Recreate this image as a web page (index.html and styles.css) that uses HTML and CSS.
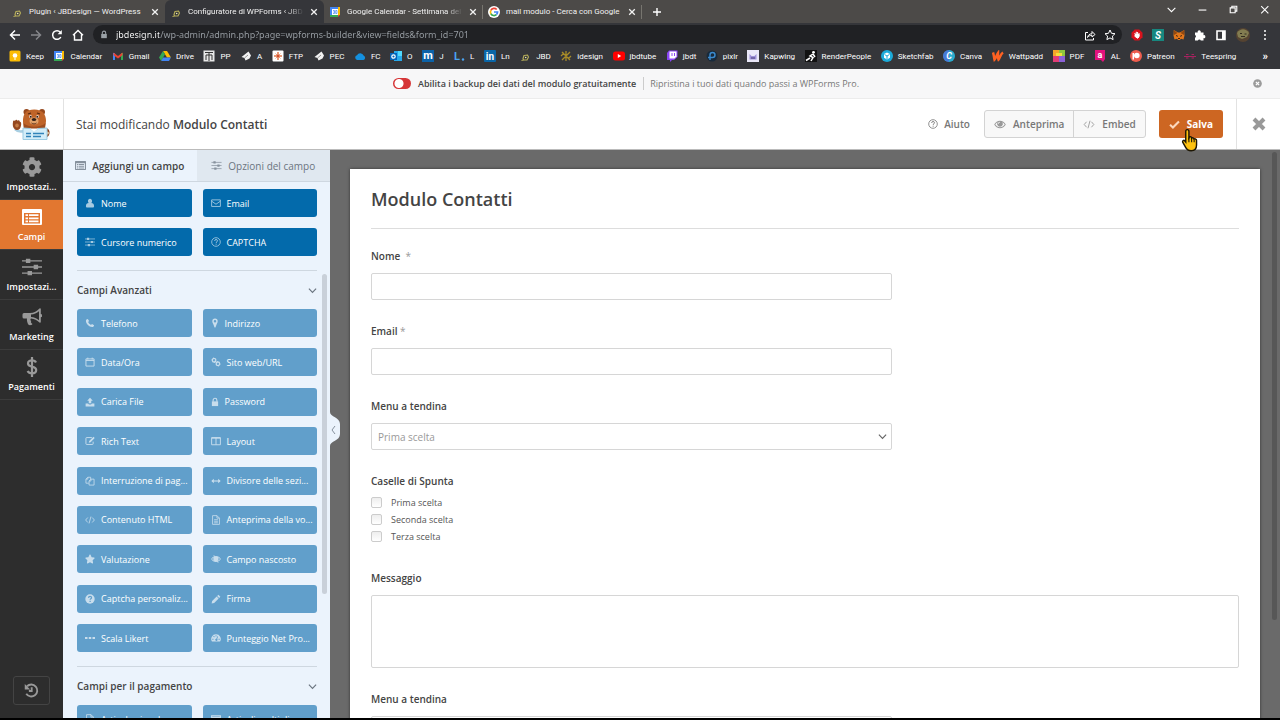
FILE: index.html
```html
<!DOCTYPE html>
<html lang="it">
<head>
    <meta charset="UTF-8">
    <meta name="viewport" content="width=device-width, initial-scale=1.0">
    <title>Configuratore di WPForms</title>
    <link rel="stylesheet" href="styles.css">
</head>
<body>
    <svg class="sprite" aria-hidden="true">
        <symbol id="i-x" viewBox="0 0 10 10"><path d="M1.5 1.5l7 7M8.500 1.500l-7 7" fill="none" stroke="currentColor" stroke-width="1.600"/></symbol>
        <symbol id="i-shell" viewBox="0 0 12 12"><path d="M5 5.500l3.500-.5 1 2-1.500 3H4.500L4 8.500z" fill="none" stroke="#b9b05a" stroke-width="1.100"/><path d="M4.500 10l-2 .5" stroke="#b9b05a"/><circle cx="6.700" cy="7.500" r=".8" fill="#eee9b0"/></symbol>
        <symbol id="i-gcal" viewBox="0 0 12 12"><path d="M1 1h10v7l-3 3H1z" fill="#4285f4"/><path d="M9 1h2v8H9z" fill="#fbbc04"/><path d="M1 9h8v2H1z" fill="#34a853"/><path d="M9 9h2l-2 2z" fill="#ea4335"/><path d="M3 3h6v6H3z" fill="#fff"/><path d="M4 4.500h1.500v3H4M4.300 6h1M6.700 4.500H8v3H6.700z" fill="none" stroke="#4285f4" stroke-width=".7"/></symbol>
        <symbol id="i-white" viewBox="0 0 12 12"><path d="M8.500 1.500L1.500 7l3 1 1 2.500 4-2 1.500-3z" fill="#f2f2f2"/><path d="M4.500 8L8 5" stroke="#777" stroke-width=".8"/></symbol>
        <symbol id="i-cog" viewBox="0 0 512 512"><path fill="currentColor" d="M487.400 315.700l-42.600-24.600c4.300-23.200 4.300-47 0-70.200l42.600-24.600c4.900-2.800 7.100-8.600 5.500-14-11.100-35.600-30-67.800-54.700-94.600-3.800-4.100-10-5.100-14.800-2.300L380.800 110c-17.900-15.400-38.500-27.300-60.800-35.100V25.800c0-5.600-3.900-10.500-9.400-11.700-36.700-8.200-74.300-7.800-109.200 0-5.500 1.200-9.400 6.100-9.400 11.700V75c-22.200 7.900-42.800 19.800-60.800 35.100L88.700 85.500c-4.900-2.800-11-1.900-14.800 2.300-24.700 26.700-43.600 58.900-54.700 94.600-1.700 5.400.6 11.200 5.500 14L67.300 221c-4.300 23.200-4.300 47 0 70.200l-42.600 24.600c-4.900 2.800-7.100 8.600-5.500 14 11.100 35.600 30 67.800 54.700 94.600 3.800 4.100 10 5.100 14.800 2.300l42.600-24.600c17.900 15.400 38.500 27.300 60.800 35.100v49.200c0 5.600 3.900 10.500 9.400 11.700 36.700 8.200 74.300 7.800 109.200 0 5.500-1.200 9.400-6.100 9.400-11.700v-49.200c22.200-7.900 42.800-19.800 60.800-35.100l42.600 24.600c4.900 2.800 11 1.900 14.800-2.300 24.700-26.700 43.600-58.900 54.700-94.600 1.500-5.500-.7-11.300-5.600-14.100zM256 336c-44.100 0-80-35.900-80-80s35.900-80 80-80 80 35.900 80 80-35.900 80-80 80z"/></symbol>
        <symbol id="i-list" viewBox="0 0 20 16"><path fill="currentColor" fill-rule="evenodd" d="M1 0h18a1 1 0 0 1 1 1v14a1 1 0 0 1-1 1H1a1 1 0 0 1-1-1V1a1 1 0 0 1 1-1zm1 4v10.500h16V4zm1.500 1.300H6v1.800H3.500zm3.500 0h9.500v1.800H7zM3.500 8.400H6v1.800H3.500zm3.500 0h9.500v1.800H7zm-3.500 3.100H6v1.800H3.500zm3.500 0h9.500v1.800H7z"/></symbol>
        <symbol id="i-sliders" viewBox="0 0 18 16"><path d="M0 2.500h18M0 8h18M0 13.500h18" stroke="currentColor" stroke-width="1.300"/><path d="M3.500.5h4v4h-4zM10.500 6h4v4h-4zM5 11.500h4v4H5z" fill="currentColor"/></symbol>
        <symbol id="i-horn" viewBox="0 0 20 18"><path fill="currentColor" fill-rule="evenodd" d="M2 5h6c4 0 7-2 9.500-4.500.6-.5 1.300-.2 1.300.5v5a1.600 1.600 0 0 1 0 3.200V14c0 .8-.8 1-1.300.5C15 12.300 12.500 10.800 9 10.500c-1 1-.5 2 .2 2.700-.7 1 .1 2 1.300 2.800-.8 1.400-3.300 1.500-4.200.6C5.500 14.500 4.600 13 5 10.500H2A1.500 1.500 0 0 1 .5 9V6.500A1.500 1.500 0 0 1 2 5zm7 1.500v2.600c3 .2 5.800 1.500 8 3.200V3.200C14.800 5 12 6.300 9 6.500z"/></symbol>
        <symbol id="i-dollar" viewBox="0 0 12 20"><path d="M10 5.500C9.200 3.800 7.500 3.400 6 3.400c-2.300 0-4 1-4 3 0 2.100 1.900 2.700 4 3.200 2.200.5 4.200 1.200 4.200 3.500 0 2.200-1.900 3.300-4.200 3.300-1.900 0-3.600-.8-4.400-2.400M6 0v20" fill="none" stroke="currentColor" stroke-width="2.200"/></symbol>
        <symbol id="i-history" viewBox="0 0 16 16"><path d="M3.200 3.500A6.400 6.400 0 1 1 2.400 11.500M8.200 4.500V8.500h-3" fill="none" stroke="currentColor" stroke-width="2"/><path d="M.8 1v5.800h5.800z" fill="currentColor"/></symbol>
        <symbol id="i-user" viewBox="0 0 16 16"><path fill="currentColor" d="M8 1c2 0 3.300 1.500 3.300 3.800 0 1.300-.5 2.500-1.300 3.200 2.800.3 4.500 1.700 4.500 5 0 1.300-.8 2-2 2h-9c-1.200 0-2-.7-2-2 0-3.300 1.700-4.700 4.500-5C5.200 7.300 4.700 6.100 4.700 4.800 4.700 2.500 6 1 8 1z"/></symbol>
        <symbol id="i-mail" viewBox="0 0 16 16"><path d="M1 3h14v10.500H1zM1 5l7 5 7-5" fill="none" stroke="currentColor" stroke-width="1.400"/></symbol>
        <symbol id="i-help" viewBox="0 0 16 16"><circle cx="8" cy="8" r="6.900" fill="none" stroke="currentColor" stroke-width="1.300"/><path d="M5.800 6.300c.1-1.500 1-2.300 2.300-2.300s2.300.8 2.300 2c0 1.600-2.200 1.700-2.200 3.400M8.200 10.700v1.600" fill="none" stroke="currentColor" stroke-width="1.500"/></symbol>
        <symbol id="i-helpfull" viewBox="0 0 16 16"><circle cx="8" cy="8" r="7.500" fill="currentColor"/><path d="M5.600 6.200c.1-1.500 1.100-2.400 2.500-2.400s2.400.8 2.400 2.100c0 1.700-2.300 1.700-2.300 3.400M8.200 10.700v1.900" fill="none" stroke="#619fcb" stroke-width="2"/></symbol>
        <symbol id="i-phone" viewBox="0 0 16 16"><path fill="currentColor" d="M4.500 1.500l2 3.300-1.500 1.700c.9 2 2.500 3.600 4.500 4.500l1.700-1.500 3.300 2c0 1.800-1.400 3-3 3C6.500 14.500 1.500 9.500 1.500 4.500c0-1.600 1.200-3 3-3z"/></symbol>
        <symbol id="i-pin" viewBox="0 0 10 16"><path fill="currentColor" fill-rule="evenodd" d="M5 .8a4.300 4.300 0 0 1 4.300 4.300c0 2-1.200 3.700-1.800 5.200L5.700 15H4.300l-1.800-4.700C1.900 8.800.7 7.100.7 5.100A4.300 4.300 0 0 1 5 .8zm0 2.300a2 2 0 1 0 0 4 2 2 0 0 0 0-4z"/></symbol>
        <symbol id="i-date" viewBox="0 0 16 16"><path d="M1.500 3h13v11.500h-13zM1.500 5.500h13M4.500 1v3M11.500 1v3" fill="none" stroke="currentColor" stroke-width="1.500"/></symbol>
        <symbol id="i-link" viewBox="0 0 16 16"><path d="M6.500 8.500L3 7.500 1.800 4.500 4 2l3.200 1L8 6M9.500 7.500l3.500 1 1.200 3L12 14l-3.200-1L8 10M6 6l4 4" fill="none" stroke="currentColor" stroke-width="2"/></symbol>
        <symbol id="i-upload" viewBox="0 0 16 16"><path fill="currentColor" d="M8 1l4.500 4.800H10V10H6V5.800H3.500zM1 10.500h4c.5 1 1.200 1.500 3 1.500s2.500-.5 3-1.500h4V15H1z"/></symbol>
        <symbol id="i-lock" viewBox="0 0 12 16"><path fill="currentColor" d="M1 7h10v7.500H1z"/><path d="M3 7.500V5a3 3 0 0 1 6 0v2.500" fill="none" stroke="currentColor" stroke-width="1.800"/></symbol>
        <symbol id="i-edit" viewBox="0 0 16 16"><path d="M11 2.500H2.500A1 1 0 0 0 1.500 3.500v9a1 1 0 0 0 1 1H12a1 1 0 0 0 1-1V9" fill="none" stroke="currentColor" stroke-width="1.500"/><path d="M13.500 1l2 2L9 9.800l-3 .8.700-2.800z" fill="currentColor"/></symbol>
        <symbol id="i-columns" viewBox="0 0 16 16"><path d="M1 2.500h14v11.500H1zM8 2.500V14M1 3.500h14" fill="none" stroke="currentColor" stroke-width="1.500"/></symbol>
        <symbol id="i-pages" viewBox="0 0 16 16"><path d="M6 11.500H1.500V5L4.500 2H9v3M4.500 2v3h-3M9.500 5H14.500v9.500H6.500V8zM9.500 5v3h-3" fill="none" stroke="currentColor" stroke-width="1.300"/></symbol>
        <symbol id="i-arrows" viewBox="0 0 16 16"><path d="M2 8h12" stroke="currentColor" stroke-width="1.800"/><path d="M4.500 4.500L.5 8l4 3.500zM11.500 4.500l4 3.500-4 3.500z" fill="currentColor"/></symbol>
        <symbol id="i-code" viewBox="0 0 16 16"><path d="M4.500 4L1 8l3.500 4M11.500 4L15 8l-3.500 4M9.500 2.500l-3 11" fill="none" stroke="currentColor" stroke-width="1.300"/></symbol>
        <symbol id="i-file" viewBox="0 0 16 16"><path d="M2.500 1h7l4 4v10h-11zM9.500 1v4h4M5 7.500h6M5 10h6M5 12.500h6" fill="none" stroke="currentColor" stroke-width="1.300"/></symbol>
        <symbol id="i-star" viewBox="0 0 576 512"><path fill="currentColor" d="M259.300 17.800L194 150.200 47.900 171.500c-26.200 3.800-36.700 36.100-17.700 54.600l105.700 103-25 145.500c-4.500 26.300 23.200 46 46.400 33.700L288 439.600l130.700 68.700c23.200 12.200 50.900-7.400 46.400-33.700l-25-145.500 105.700-103c19-18.500 8.500-50.800-17.700-54.600L382 150.200 316.700 17.800c-11.700-23.600-45.600-23.900-57.400 0z"/></symbol>
        <symbol id="i-eye" viewBox="0 0 18 16"><path fill="currentColor" fill-rule="evenodd" d="M9 2.500c3.600 0 6.800 2.200 8.700 5.500-1.900 3.300-5.100 5.500-8.700 5.500S2.200 11.300.3 8C2.200 4.700 5.400 2.500 9 2.500zM1.900 8c1.600 2.400 4.200 4.200 7.100 4.200s5.500-1.800 7.100-4.200A9 9 0 0 0 12.600 4.700 4.300 4.300 0 1 1 5.400 4.700 9 9 0 0 0 1.900 8zM9 3.800a3 3 0 0 0-3 3h1.200A1.800 1.800 0 0 1 9 5z"/></symbol>
        <symbol id="i-eyeoff" viewBox="0 0 18 16"><path fill="currentColor" fill-rule="evenodd" d="M9 2.500c3.600 0 6.800 2.200 8.700 5.500-1.900 3.300-5.100 5.500-8.700 5.500S2.200 11.300.3 8C2.200 4.700 5.400 2.500 9 2.500zM1.900 8c1.200 1.900 3 3.300 5.100 3.900A4.300 4.300 0 0 1 5.400 4.700 9 9 0 0 0 1.900 8zm10.700-3.300a4.300 4.300 0 0 1-1.500 6.900c2-.6 3.800-2 5-3.600a9 9 0 0 0-3.500-3.300z"/><path d="M5 1l8 14" stroke="currentColor" stroke-width="1.300"/></symbol>
        <symbol id="i-pencil" viewBox="0 0 16 16"><path fill="currentColor" d="M11.800 1l3.200 3.200-2 2L9.800 3zM9 3.800L12.200 7 5 14.200l-4 .8.800-4z"/></symbol>
        <symbol id="i-dots" viewBox="0 0 16 16"><path fill="currentColor" d="M0 6.500h4v3H0zM6 6.500h4v3H6zM12 6.500h4v3h-4z"/></symbol>
        <symbol id="i-gauge" viewBox="0 0 16 16"><path fill="currentColor" fill-rule="evenodd" d="M8 2a7.500 7.500 0 0 1 6.500 11.500h-13A7.500 7.500 0 0 1 8 2zm-.8 1.500v2h1.600v-2zM2 9v1.600h2V9zm10 0v1.600h2V9zM3.500 5.500L5 7l1-1-1.500-1.500zM10.200 5L8.500 9a1.800 1.800 0 1 0 1.400.5l1.500-4z"/></symbol>
        <symbol id="i-card" viewBox="0 0 16 16"><path d="M1 3h14v10H1zM1 5.500h14" fill="none" stroke="currentColor" stroke-width="1.800"/></symbol>
        <symbol id="i-down" viewBox="0 0 10 10"><path d="M1 3l4 4 4-4" fill="none" stroke="currentColor" stroke-width="1.300"/></symbol>
        <symbol id="i-check" viewBox="0 0 16 16"><path d="M1.500 8.500l4.200 4L14.500 3.500" fill="none" stroke="currentColor" stroke-width="3"/></symbol>
    </svg>

    <header class="browser">
        <div class="tabs">
            <div class="tab">
                <svg class="fav"><use href="#i-shell"/></svg>
                <span class="tab-title">Plugin ‹ JBDesign — WordPress</span>
                <button class="tab-close" aria-label="Chiudi scheda"><svg><use href="#i-x"/></svg></button>
            </div>
            <div class="tab active">
                <svg class="fav"><use href="#i-shell"/></svg>
                <span class="tab-title fade">Configuratore di WPForms ‹ JBD</span>
                <button class="tab-close" aria-label="Chiudi scheda"><svg><use href="#i-x"/></svg></button>
            </div>
            <div class="tab line">
                <svg class="fav"><use href="#i-gcal"/></svg>
                <span class="tab-title fade">Google Calendar - Settimana del</span>
                <button class="tab-close" aria-label="Chiudi scheda"><svg><use href="#i-x"/></svg></button>
            </div>
            <div class="tab line">
                <svg class="fav" viewBox="0 0 12 12"><circle cx="6" cy="6" r="6" fill="#fff"/><g fill="none" stroke-width="1.700"><path d="M8.700 3.500A3.600 3.600 0 0 0 2.900 4.300" stroke="#ea4335"/><path d="M2.900 4.300a3.600 3.600 0 0 0 0 3.500" stroke="#fbbc04"/><path d="M2.900 7.800a3.600 3.600 0 0 0 5.500.8" stroke="#34a853"/><path d="M8.400 8.600A3.600 3.600 0 0 0 9.600 6H6" stroke="#4285f4"/></g></svg>
                <span class="tab-title">mail modulo - Cerca con Google</span>
                <button class="tab-close" aria-label="Chiudi scheda"><svg><use href="#i-x"/></svg></button>
            </div>
            <button class="new-tab" aria-label="Nuova scheda"><svg viewBox="0 0 10 10"><path d="M5 1v8M1 5h8" stroke="currentColor" stroke-width="1.400"/></svg></button>
            <div class="window-buttons">
                <button aria-label="Cerca schede"><svg viewBox="0 0 10 10"><path d="M1.500 3.500L5 7l3.500-3.500" fill="none" stroke="currentColor"/></svg></button>
                <button aria-label="Riduci"><svg viewBox="0 0 10 10"><path d="M1.500 5.500h7" stroke="currentColor"/></svg></button>
                <button aria-label="Ripristina"><svg viewBox="0 0 10 10"><path d="M2 3.500h4.500V8H2zM3.500 3.500V2H8v4.500H6.500" fill="none" stroke="currentColor"/></svg></button>
                <button aria-label="Chiudi"><svg viewBox="0 0 10 10"><path d="M2 2l6.500 6.500M8.500 2L2 8.500" stroke="currentColor"/></svg></button>
            </div>
        </div>

        <div class="toolbar">
            <button aria-label="Indietro"><svg viewBox="0 0 12 12"><path d="M11 6H2M6 1.500L1.500 6 6 10.500" fill="none" stroke="currentColor" stroke-width="1.500"/></svg></button>
            <button class="dim" aria-label="Avanti"><svg viewBox="0 0 12 12"><path d="M1 6h9M6 1.500L10.500 6 6 10.500" fill="none" stroke="currentColor" stroke-width="1.500"/></svg></button>
            <button aria-label="Ricarica"><svg viewBox="0 0 12 12"><path d="M9.800 8A4.300 4.300 0 1 1 9.300 3.300" fill="none" stroke="currentColor" stroke-width="1.500"/><path d="M10.800 1v4.200H6.600z" fill="currentColor"/></svg></button>
            <button aria-label="Home"><svg viewBox="0 0 12 12"><path d="M1 6.300L6 1.500l5 4.800M2.500 5.500V11h7V5.500" fill="none" stroke="currentColor" stroke-width="1.400"/></svg></button>
            <div class="address">
                <svg class="padlock"><use href="#i-lock"/></svg>
                <input type="text" aria-label="Indirizzo" value="jbdesign.it/wp-admin/admin.php?page=wpforms-builder&amp;view=fields&amp;form_id=701">
                <button aria-label="Condividi"><svg viewBox="0 0 12 12"><path d="M4 3.500H1.500V11h8V9M3.500 8.500c.5-2.500 2-3.700 4.500-3.700V2.500L11 5.500 8 8V6.300C6 6.300 4.600 7 3.500 8.500z" fill="none" stroke="currentColor"/></svg></button>
                <button aria-label="Preferiti"><svg viewBox="0 0 12 12"><path d="M6 1l1.500 3.300 3.500.4-2.600 2.400.7 3.500L6 8.900l-3.100 1.700.7-3.500L1 4.700l3.500-.4z" fill="none" stroke="currentColor"/></svg></button>
            </div>
            <div class="extensions">
                <button aria-label="Adblock"><svg viewBox="0 0 12 12"><path d="M3.700.5h4.600l3.200 3.200v4.600l-3.200 3.200H3.700L.5 8.300V3.700z" fill="#d8121c"/><path d="M4 5.500V4M5.300 5.500V2.800M6.600 5.500V3M8 7V4M4 5.500h4V8L6.500 9.300 3.500 7" stroke="#fff" stroke-width="1" fill="#fff"/></svg></button>
                <button aria-label="Stylish"><svg viewBox="0 0 12 12"><path d="M0 0h12v12H0z" fill="#17877f"/><text x="6" y="10" font-size="10" font-weight="700" font-style="italic" text-anchor="middle" fill="#fff">S</text></svg></button>
                <button aria-label="MetaMask"><svg viewBox="0 0 12 12"><path d="M.8 1L5 3.500h2L11.200 1l.3 5.500-1 4L8 9.700 6.800 11H5.200L4 9.700l-2.500.8-1-4z" fill="#e2761b"/><path d="M3 6.500l1.800.8M9 6.500l-1.800.8M5 9.500h2" stroke="#3a2314"/><path d="M.8 1L4.500 4 1 6z" fill="#94490f"/><path d="M11.200 1L7.500 4 11 6z" fill="#94490f"/></svg></button>
                <button aria-label="Estensioni"><svg viewBox="0 0 12 12"><path d="M1 3.500h2.700a1.600 1.600 0 1 1 3 0H9.500v2.700a1.500 1.500 0 1 1 0 2.900V11.500H6.800a1.500 1.500 0 0 0-2.900 0H1V8.800a1.500 1.500 0 0 0 0-2.800z" fill="#fff"/></svg></button>
                <button aria-label="Pannello laterale"><svg viewBox="0 0 12 12"><path d="M2 2h8v8.500H2z" fill="none" stroke="#fff" stroke-width="1.600"/><path d="M7 2h3v8H7z" fill="#fff"/></svg></button>
                <button aria-label="Profilo"><svg class="avatar" viewBox="0 0 14 14"><circle cx="7" cy="7" r="7" fill="#554331"/><path d="M1 5c3-5 9-5 12 0l-2 4-5 2-4-2z" fill="#827c50"/><path d="M4 5.500h2M8.500 6h2M5 8.500h4" stroke="#332d20"/></svg></button>
                <button aria-label="Menu"><svg viewBox="0 0 12 12"><circle cx="6" cy="2" r="1" fill="#fff"/><circle cx="6" cy="6" r="1" fill="#fff"/><circle cx="6" cy="10" r="1" fill="#fff"/></svg></button>
            </div>
        </div>

        <nav class="bookmarks">
            <div class="bookmark-list">
                <a href="#"><svg viewBox="0 0 12 12"><rect x=".5" y=".5" width="11" height="11" rx="1.500" fill="#fbbc04"/><circle cx="6" cy="5.500" r="2.300" fill="#fff"/><path d="M5 8.500h2v1H5z" fill="#fff"/></svg>Keep</a>
                <a href="#"><svg><use href="#i-gcal"/></svg>Calendar</a>
                <a href="#"><svg viewBox="0 0 12 12"><path d="M1 10V3h2v7z" fill="#4285f4"/><path d="M9 10V3h2v7z" fill="#34a853"/><path d="M1.500 2.500L6 6l4.500-3.500v2.700L6 8.500 1.500 5.200z" fill="#ea4335"/></svg>Gmail</a>
                <a href="#"><svg viewBox="0 0 12 12"><path d="M4 1h4l4 6.500H8z" fill="#fbbc04"/><path d="M4 1l2 3.300L2.200 11 0 7.500z" fill="#34a853"/><path d="M4 7.500h8L10 11H2.200z" fill="#4285f4"/></svg>Drive</a>
                <a href="#"><svg viewBox="0 0 12 12"><path d="M.5.5h11v11H.5z" fill="#e8e8e8"/><path d="M2 2.500h8M3 5h6M6 3v8M3 5v5M9 5v5" stroke="#333"/></svg>PP</a>
                <a href="#"><svg><use href="#i-white"/></svg>A</a>
                <a href="#"><svg viewBox="0 0 12 12"><rect x=".5" y=".5" width="11" height="11" rx="1" fill="#fff"/><path d="M6 2v8M2 6h8" stroke="#e07a4c" stroke-width="1.500"/><path d="M3.500 3.500l5 5M8.500 3.500l-5 5" stroke="#e9a180"/><circle cx="6" cy="6" r="1.300" fill="#d64c2a"/></svg>FTP</a>
                <a href="#"><svg><use href="#i-white"/></svg>PEC</a>
                <a href="#"><svg viewBox="0 0 12 12"><path d="M3 10a2.500 2.500 0 0 1 0-4.800A3.600 3.600 0 0 1 9.600 5.500 2.400 2.400 0 0 1 9.500 10z" fill="#1490df"/></svg>FC</a>
                <a href="#"><svg viewBox="0 0 12 12"><path d="M4 1h8v10H4z" fill="#28a8ea"/><path d="M8 1h4v5H8z" fill="#50d9ff"/><path d="M0 3h7v7H0z" fill="#0364b8"/><circle cx="3.500" cy="6.500" r="1.700" fill="none" stroke="#fff" stroke-width="1.200"/></svg>O</a>
                <a href="#"><svg viewBox="0 0 12 12"><path d="M0 0h12v12H0z" fill="#0b62a8"/><text x="6" y="9" font-size="11" font-weight="700" text-anchor="middle" fill="#fff">m</text></svg>J</a>
                <a href="#"><svg viewBox="0 0 12 12"><text x="1" y="10" font-size="11" font-weight="700" fill="#4ba3f2">L</text><circle cx="10" cy="9.500" r="1.200" fill="#4ba3f2"/></svg>L</a>
                <a href="#"><svg viewBox="0 0 12 12"><rect width="12" height="12" rx="1" fill="#0a66a8"/><text x="6" y="10" font-size="10" font-weight="700" text-anchor="middle" fill="#fff">in</text></svg>Ln</a>
                <a href="#"><svg><use href="#i-shell"/></svg>JBD</a>
                <a href="#"><svg viewBox="0 0 12 12"><path d="M2 2l8 8M10 2l-8 8M6 1v10M1 6l3-3M8 9l3-3" fill="none" stroke="#a88b28" stroke-width="1.300"/></svg>idesign</a>
                <a href="#"><svg viewBox="0 0 12 12"><rect y="1.500" width="12" height="9" rx="2.500" fill="#f00"/><path d="M4.800 4l3.400 2-3.400 2z" fill="#fff"/></svg>jbdtube</a>
                <a href="#"><svg viewBox="0 0 12 12"><path d="M1 3l2-2.500h8.500V7L8 10H6l-2 2v-2H1z" fill="#8a45f5"/><path d="M3.500 1.500h7V6.500L8.500 8.500H3.500z" fill="#fff"/><path d="M6 3v3M8.500 3v3" stroke="#8a45f5"/></svg>jbdt</a>
                <a href="#"><svg viewBox="0 0 12 12"><circle cx="6" cy="6" r="5.500" fill="#182a3c"/><path d="M4 10V5a2.500 2.500 0 1 1 2.500 2.500H2" fill="none" stroke="#3b8bd0" stroke-width="1.400"/></svg>pixlr</a>
                <a href="#"><svg viewBox="0 0 12 12"><path d="M0 0h12v12H0z" fill="#e9e7f8"/><path d="M2.500 9.500V4l2 2h3l2-2v5.500z" fill="#9d91d8"/><path d="M4 8h4" stroke="#463b79"/></svg>Kapwing</a>
                <a href="#"><svg viewBox="0 0 12 12"><path d="M0 0h12v12H0z" fill="#111"/><circle cx="8.500" cy="2.300" r="1.400" fill="#fff"/><path d="M8 4L5 6l3 1.500L6 11M8 4l2 3M5 8L1 10.500" stroke="#fff" stroke-width="1.500" fill="none"/></svg>RenderPeople</a>
                <a href="#"><svg viewBox="0 0 12 12"><circle cx="6" cy="6" r="6" fill="#1caad9"/><path d="M6 2.500l3 1.600v3.600L6 9.500 3 7.700V4.100z" fill="#fff"/><path d="M3.500 4.500L6 6l2.500-1.500M6 6v3" stroke="#1caad9" fill="none"/></svg>Sketchfab</a>
                <a href="#"><svg viewBox="0 0 12 12"><circle cx="6" cy="6" r="6" fill="#2aaccf"/><path d="M6 0a6 6 0 0 0-6 6c0 3 3 6 6 6z" fill="#5b58df" opacity=".6"/><text x="6" y="9" font-size="9" font-style="italic" font-weight="700" text-anchor="middle" fill="#fff">C</text></svg>Canva</a>
                <a href="#"><svg viewBox="0 0 12 12"><path d="M1 2.500c1 3 1 5 1.500 7C4 8 4.500 5 6 3c0 2-.2 4.500.5 6.500C8 8 8.500 4 11 2.500" fill="none" stroke="#ff6122" stroke-width="2.500"/></svg>Wattpadd</a>
                <a href="#"><svg viewBox="0 0 12 12"><path d="M0 0h6v6H0z" fill="#f4a62a"/><path d="M6 0h6v6H6z" fill="#8fc73e"/><path d="M0 6h6v6H0z" fill="#e23d77"/><path d="M6 6h6v6H6z" fill="#8c62d8"/><path d="M3 3h6v3H3z" fill="#f5df3c"/></svg>PDF</a>
                <a href="#"><svg viewBox="0 0 12 12"><path d="M1 0h10v9L9 12l-2-2H1z" fill="#e3127c"/><text x="6" y="8" font-size="9" font-weight="700" text-anchor="middle" fill="#fff">a</text></svg>AL</a>
                <a href="#"><svg viewBox="0 0 12 12"><circle cx="6" cy="6" r="6" fill="#ee5d4e"/><circle cx="6.800" cy="5.500" r="2.800" fill="#fff"/><path d="M2.500 3H4v6.500H2.500z" fill="#fff"/></svg>Patreon</a>
                <a href="#"><svg viewBox="0 0 12 12"><path d="M0 6.500h12M2 4.500h2.500M7.500 4.500H10M2 8h2.500M7.500 8H10" stroke="#a82260" stroke-width="1.200"/></svg>Teespring</a>
            </div>
            <button class="more" aria-label="Altri preferiti">»</button>
        </nav>
    </header>

    <div class="notice">
        <label class="notice-toggle">
            <input type="checkbox" class="switch">
            <strong>Abilita i backup dei dati del modulo gratuitamente</strong>
        </label>
        <span class="notice-text">Ripristina i tuoi dati quando passi a WPForms Pro.</span>
        <button class="notice-close" aria-label="Nascondi avviso"><svg viewBox="0 0 10 10"><circle cx="5" cy="5" r="4.800" fill="#9b9b9b"/><path d="M3.200 3.200l3.600 3.600M6.800 3.200L3.200 6.800" stroke="#fff" stroke-width="1.400"/></svg></button>
    </div>

    <div class="topbar">
        <div class="logo">
            <svg viewBox="0 0 40 32">
                <circle cx="14.500" cy="4" r="3" fill="#96481d"/><circle cx="30" cy="4" r="3" fill="#96481d"/>
                <path d="M30 21c5-3 9 1 7 6-1 2-3 3-5 2z" fill="#87401b"/><circle cx="35.500" cy="25" r="1.500" fill="#e5c49c"/>
                <path d="M12 21L11 14c-.5-8 3-12.500 11.300-12.500S34 6.500 34 13l-1 8z" fill="#bf6429"/>
                <path d="M11.500 15c5 5 17 5 22 0l-1 6H12z" fill="#9e4d1f"/>
                <ellipse cx="22" cy="13" rx="4.500" ry="3.500" fill="#e0a068"/>
                <ellipse cx="22" cy="11.500" rx="2.200" ry="1.500" fill="#352018"/><path d="M19.500 15c1.600 1.300 3.400 1.300 5 0" fill="none" stroke="#63351d"/>
                <ellipse cx="18.500" cy="8.500" rx="1.300" ry="1.500" fill="#fff"/><ellipse cx="25.500" cy="8.500" rx="1.300" ry="1.500" fill="#fff"/><circle cx="18.700" cy="8.700" r="1" fill="#2b1b14"/><circle cx="25.300" cy="8.700" r="1" fill="#2b1b14"/>
                <path d="M16 6l3-1M25 5l3 1" stroke="#542810" stroke-width="1.200"/>
                <path d="M3 21c3 3 6 3 9 2" stroke="#a9cfe2" stroke-width="2.500" fill="none"/>
                <path d="M1 14c0-2 2-1.500 2-1 .5-1.500 2-1.500 2.500-.3.800-1 2.300-.5 2.300 1 1.400 0 1.700 2 1.200 4-.5 3-2 4.500-4.300 4.300C1.500 21.500.2 18 1 14z" fill="#95481e"/><ellipse cx="5" cy="17.500" rx="1.800" ry="2" fill="#c47b45"/>
                <path d="M11 20l7 .5 4 3 4-3 9-.5v11.500H11z" fill="#d3edf8" stroke="#9bcbe2"/><path d="M18 20.500l4 3.500 4-3.500z" fill="#fff"/>
                <path d="M14 25.500h5M14 28.500h5M21 25.500h11M21 28.500h8" stroke="#3284b9" stroke-width="1.400"/>
            </svg>
        </div>
        <div class="form-name">Stai modificando <strong>Modulo Contatti</strong></div>
        <a href="#" class="help"><svg><use href="#i-help"/></svg>Aiuto</a>
        <div class="button-group">
            <button><svg><use href="#i-eye"/></svg>Anteprima</button>
            <button><svg><use href="#i-code"/></svg>Embed</button>
        </div>
        <button class="save">
            <svg><use href="#i-check"/></svg>Salva
            <svg class="cursor" viewBox="0 0 16 22"><path d="M5.500 1.500c1 0 1.500.7 1.500 1.600v6l.5-.9c1-.4 2 .1 2 1.100.8-.7 2-.3 2.200.8 1-.5 2.300.1 2.300 1.400v4c0 3-1.600 5.300-5 5.300-2.700 0-4-1-5-3L1.300 13c-.5-1.400 1-2.300 2-1.100l.8 1V3.100c0-.9.500-1.600 1.400-1.600z" fill="#ffc20e" stroke="#1d1604" stroke-width="1.300"/><path d="M7 9v4M9.500 9.500V13M11.800 10.500V13" stroke="#1d1604"/></svg>
        </button>
        <button class="exit" aria-label="Esci"><svg viewBox="0 0 14 14"><path d="M2 2l10 10M12 2L2 12" stroke="currentColor" stroke-width="4"/></svg></button>
    </div>

    <div class="builder">
        <nav class="sidebar">
            <button><svg><use href="#i-cog"/></svg>Impostazi...</button>
            <button class="active"><svg><use href="#i-list"/></svg>Campi</button>
            <button><svg><use href="#i-sliders"/></svg>Impostazi...</button>
            <button><svg><use href="#i-horn"/></svg>Marketing</button>
            <button><svg><use href="#i-dollar"/></svg>Pagamenti</button>
            <button class="history" aria-label="Cronologia revisioni"><svg><use href="#i-history"/></svg></button>
        </nav>

        <aside class="panel">
            <div class="panel-tabs">
                <button class="active"><svg><use href="#i-list"/></svg>Aggiungi un campo</button>
                <button><svg><use href="#i-sliders"/></svg>Opzioni del campo</button>
            </div>
            <div class="panel-body">
                <div class="field-grid standard">
                    <button><svg><use href="#i-user"/></svg><span>Nome</span></button>
                    <button><svg><use href="#i-mail"/></svg><span>Email</span></button>
                    <button><svg><use href="#i-sliders"/></svg><span>Cursore numerico</span></button>
                    <button><svg><use href="#i-help"/></svg><span>CAPTCHA</span></button>
                </div>
                <h2>Campi Avanzati <svg><use href="#i-down"/></svg></h2>
                <div class="field-grid advanced">
                    <button><svg><use href="#i-phone"/></svg><span>Telefono</span></button>
                    <button><svg class="narrow"><use href="#i-pin"/></svg><span>Indirizzo</span></button>
                    <button><svg><use href="#i-date"/></svg><span>Data/Ora</span></button>
                    <button><svg><use href="#i-link"/></svg><span>Sito web/URL</span></button>
                    <button><svg><use href="#i-upload"/></svg><span>Carica File</span></button>
                    <button><svg class="narrow"><use href="#i-lock"/></svg><span>Password</span></button>
                    <button><svg><use href="#i-edit"/></svg><span>Rich Text</span></button>
                    <button><svg><use href="#i-columns"/></svg><span>Layout</span></button>
                    <button><svg><use href="#i-pages"/></svg><span>Interruzione di pag...</span></button>
                    <button><svg><use href="#i-arrows"/></svg><span>Divisore delle sezi...</span></button>
                    <button><svg><use href="#i-code"/></svg><span>Contenuto HTML</span></button>
                    <button><svg><use href="#i-file"/></svg><span>Anteprima della vo...</span></button>
                    <button><svg><use href="#i-star"/></svg><span>Valutazione</span></button>
                    <button><svg><use href="#i-eyeoff"/></svg><span>Campo nascosto</span></button>
                    <button><svg><use href="#i-helpfull"/></svg><span>Captcha personaliz...</span></button>
                    <button><svg><use href="#i-pencil"/></svg><span>Firma</span></button>
                    <button><svg><use href="#i-dots"/></svg><span>Scala Likert</span></button>
                    <button><svg><use href="#i-gauge"/></svg><span>Punteggio Net Pro...</span></button>
                </div>
                <h2>Campi per il pagamento <svg><use href="#i-down"/></svg></h2>
                <div class="field-grid">
                    <button><svg><use href="#i-file"/></svg><span>Articolo singolo</span></button>
                    <button><svg><use href="#i-card"/></svg><span>Articoli multipli</span></button>
                </div>
            </div>
            <div class="panel-scroll"></div>
            <button class="collapse" aria-label="Comprimi pannello"><svg viewBox="0 0 10 34"><path d="M0 0c0 5 10 5 10 12v10c0 7-10 7-10 12z" fill="#ebf3fc"/><path d="M5 14l-3 4 3 4" fill="none" stroke="#86919d"/></svg></button>
        </aside>

        <main class="canvas">
            <form class="preview">
                <h1>Modulo Contatti</h1>
                <div class="field">
                    <label for="nome">Nome <span class="required">&nbsp;*</span></label>
                    <input type="text" id="nome">
                </div>
                <div class="field">
                    <label for="email">Email <span class="required">*</span></label>
                    <input type="email" id="email">
                </div>
                <div class="field">
                    <label for="menu">Menu a tendina</label>
                    <div class="select-box">
                        <select id="menu"><option>Prima scelta</option></select>
                        <svg><use href="#i-down"/></svg>
                    </div>
                </div>
                <fieldset class="field">
                    <legend>Caselle di Spunta</legend>
                    <label class="choice"><input type="checkbox">Prima scelta</label>
                    <label class="choice"><input type="checkbox">Seconda scelta</label>
                    <label class="choice"><input type="checkbox">Terza scelta</label>
                </fieldset>
                <div class="field">
                    <label for="messaggio">Messaggio</label>
                    <textarea id="messaggio"></textarea>
                </div>
                <div class="field">
                    <label for="menu2">Menu a tendina</label>
                    <div class="select-box">
                        <select id="menu2"><option>Prima scelta</option></select>
                        <svg><use href="#i-down"/></svg>
                    </div>
                </div>
            </form>
            <div class="page-scroll"></div>
        </main>
    </div>
</body>
</html>
```
FILE: styles.css
```css
* {
    box-sizing: border-box;
}
body {
    margin: 0;
    height: 100vh;
    display: flex;
    flex-direction: column;
    overflow: hidden;
    border-bottom: 2px solid #000;
    font-family: "Open Sans", "Noto Sans", sans-serif;
    font-size: 10px;
    color: #444;
}
button, input, select, textarea {
    font: inherit;
    color: inherit;
}
button {
    display: flex;
    align-items: center;
    border: 0;
    padding: 0;
    background: none;
    cursor: pointer;
    white-space: nowrap;
}
a {
    color: inherit;
    text-decoration: none;
}
svg {
    display: block;
    flex: none;
}
strong {
    font-weight: 600;
}
.sprite {
    position: absolute;
    width: 0;
    height: 0;
}

/* browser */
.browser {
    flex: none;
    background: #35363a;
    color: #fff;
    font-family: Roboto, "Noto Sans", sans-serif;
    font-size: 8px;
}
.tabs {
    display: flex;
    height: 23px;
    padding-left: 6px;
    background: #4c4a48;
}
.tab {
    display: flex;
    align-items: center;
    gap: 6px;
    flex: 0 1 159px;
    min-width: 0;
    padding: 0 6px 0 5px;
    color: #f1f1f1;
}
.tab.active {
    background: #35363a;
    border-radius: 6px 6px 0 0;
}
.tab.line {
    background: linear-gradient(#77756f, #77756f) right center / 1px 14px no-repeat;
}
.fav {
    width: 12px;
    height: 12px;
}
.tab-title {
    flex: 1;
    overflow: hidden;
    white-space: nowrap;
}
.tab-title.fade {
    -webkit-mask-image: linear-gradient(90deg, #000 85%, transparent);
    mask-image: linear-gradient(90deg, #000 85%, transparent);
}
.tab-close svg {
    width: 8px;
    height: 8px;
}
.new-tab {
    margin-left: 10px;
}
.new-tab svg {
    width: 10px;
    height: 10px;
}
.window-buttons {
    display: flex;
    gap: 20px;
    margin-left: auto;
    padding: 0 10px 4px 0;
}
.window-buttons svg {
    width: 11px;
    height: 11px;
}
.toolbar {
    display: flex;
    align-items: center;
    gap: 9px;
    height: 23px;
    padding: 0 9px;
}
.toolbar svg {
    width: 12px;
    height: 12px;
}
.dim {
    color: #85868a;
}
.address {
    display: flex;
    align-items: center;
    gap: 8px;
    flex: 1;
    height: 19px;
    padding: 0 6px 0 7px;
    border-radius: 10px;
    background: #202124;
}
.toolbar .padlock {
    width: 8px;
    height: 9px;
    color: #9aa0a6;
}
.address input {
    flex: 1;
    border: 0;
    padding: 0;
    outline: 0;
    font-family: "Noto Sans", sans-serif;
    font-size: 9px;
    background: linear-gradient(90deg, #fff 43px, #9aa0a6 43px);
    -webkit-background-clip: text;
    background-clip: text;
    color: transparent;
}
.extensions {
    display: flex;
    align-items: center;
    gap: 9px;
}
.toolbar .avatar {
    width: 14px;
    height: 14px;
}
.bookmarks {
    display: flex;
    align-items: center;
    gap: 26px;
    height: 23px;
    padding: 0 12px 3px 9px;
}
.bookmark-list {
    display: flex;
    justify-content: space-between;
    flex: 1;
}
.bookmarks a {
    display: flex;
    align-items: center;
    gap: 5px;
    white-space: nowrap;
}
.bookmarks svg {
    width: 12px;
    height: 12px;
}
.more {
    font-size: 11px;
    font-weight: 700;
}

/* notice */
.notice {
    display: flex;
    align-items: center;
    justify-content: center;
    flex: none;
    height: 30px;
    position: relative;
    background: #f7f7f8;
    border-bottom: 1px solid #ececec;
    font-size: 9px;
}
.notice-toggle {
    display: flex;
    align-items: center;
    gap: 7px;
    padding-right: 7px;
    border-right: 1px solid #ccc;
}
.notice-text {
    padding-left: 6px;
    margin-right: 28px;
    color: #777;
}
.switch {
    appearance: none;
    width: 18px;
    height: 11px;
    margin: 0;
    border-radius: 6px;
    background: radial-gradient(circle at 6px 50%, #fff 4px, transparent 5px) #d63638;
}
.notice-close {
    position: absolute;
    right: 18px;
}
.notice-close svg {
    width: 9px;
    height: 9px;
}

/* top bar */
.topbar {
    display: flex;
    align-items: center;
    flex: none;
    height: 51px;
    background: #fff;
    border-bottom: 1px solid #bbb;
}
.logo {
    display: flex;
    align-items: center;
    justify-content: center;
    align-self: stretch;
    width: 64px;
    border-right: 1px solid #e2e2e2;
}
.logo svg {
    width: 40px;
    height: 32px;
}
.form-name {
    flex: 1;
    padding-left: 12px;
    font-size: 12px;
}
.help {
    display: flex;
    align-items: center;
    gap: 6px;
    margin-right: 14px;
    font-weight: 600;
    color: #777;
}
.topbar button {
    font-weight: 600;
}
.help svg {
    width: 10px;
    height: 10px;
}
.button-group {
    display: flex;
    margin-right: 13px;
    border: 1px solid #d3d3d3;
    border-radius: 3px;
    background: #f8f8f8;
    color: #777;
}
.button-group button {
    height: 26px;
    gap: 7px;
    padding: 0 9px;
}
.button-group button + button {
    border-left: 1px solid #d3d3d3;
}
.button-group svg {
    width: 12px;
    height: 11px;
    color: #999;
}
.topbar .save {
    position: relative;
    gap: 7px;
    height: 28px;
    padding: 0 10px;
    border-radius: 3px;
    background: #cd6622;
    color: #fff;
    font-weight: 700;
}
.save svg {
    width: 11px;
    height: 11px;
    color: #fbd8bd;
}
.save .cursor {
    position: absolute;
    left: 22px;
    top: 18px;
    width: 18px;
    height: 24px;
    z-index: 2;
}
.exit {
    justify-content: center;
    align-self: stretch;
    width: 44px;
    margin-left: 13px;
    border-left: 1px solid #e2e2e2;
    color: #999;
}
.exit svg {
    width: 14px;
    height: 14px;
}

/* builder */
.builder {
    display: flex;
    flex: 1;
    min-height: 0;
}
.sidebar {
    display: flex;
    flex-direction: column;
    flex: none;
    width: 63px;
    background: #2d2d2d;
}
.sidebar button {
    flex-direction: column;
    justify-content: center;
    gap: 3px;
    height: 50px;
    border-bottom: 1px solid #3c3c3c;
    font-size: 9px;
    font-weight: 600;
    color: #fff;
}
.sidebar svg {
    width: 20px;
    height: 20px;
    color: #999;
}
.sidebar .active {
    background: #e27730;
}
.sidebar .active svg {
    color: #fff;
}
.sidebar .history {
    width: 37px;
    height: 29px;
    margin: auto auto 13px;
    border: 1px solid #444;
    border-radius: 3px;
}
.history svg {
    width: 15px;
    height: 15px;
}
.panel {
    display: flex;
    flex-direction: column;
    flex: none;
    position: relative;
    width: 267px;
    background: #ebf3fc;
}
.panel-tabs {
    display: flex;
    flex: none;
    height: 32px;
    border-bottom: 1px solid #ced7e0;
}
.panel-tabs button {
    flex: 1;
    justify-content: center;
    gap: 6px;
    background: #e0e8f0;
    color: #6b7580;
}
.panel-tabs .active {
    background: #ebf3fc;
    color: #444;
    font-weight: 600;
}
.panel-tabs svg {
    width: 11px;
    height: 9px;
    color: #86919d;
}
.panel-body {
    flex: 1;
    min-height: 0;
    overflow: hidden;
    padding: 7px 13px 0 14px;
}
.field-grid {
    display: grid;
    grid-template-columns: 1fr 1fr;
    gap: 11px;
}
.field-grid button {
    min-width: 0;
    height: 28px;
    gap: 6px;
    padding: 0 2px 0 8px;
    border-radius: 3px;
    background: #619fcb;
    color: #fff;
    font-size: 9px;
}
.standard button {
    background: #036aab;
}
.advanced {
    min-height: 343px;
    align-content: space-between;
    row-gap: 0;
}
.field-grid svg {
    width: 10px;
    height: 10px;
    opacity: .65;
}
.field-grid .narrow {
    width: 8px;
}
.panel h2 {
    display: flex;
    align-items: center;
    justify-content: space-between;
    height: 39px;
    margin: 14px 0 0;
    border-top: 1px solid #ced7e0;
    font-size: 10px;
    font-weight: 600;
}
.panel h2 svg {
    width: 9px;
    height: 9px;
    color: #6b7580;
}
.panel-scroll {
    position: absolute;
    right: 3px;
    top: 124px;
    width: 5px;
    height: 320px;
    border-radius: 3px;
    background: #c9d0d9;
}
.collapse {
    position: absolute;
    left: 100%;
    top: 262px;
    z-index: 1;
}
.collapse svg {
    width: 10px;
    height: 34px;
}
.canvas {
    flex: 1;
    position: relative;
    padding: 19px 20px 0;
    background: #6a6a6a;
    overflow: hidden;
}
.preview {
    min-height: 100%;
    padding: 0 21px;
    background: #fff;
    box-shadow: 0 0 3px rgba(0, 0, 0, .5);
}
.preview h1 {
    height: 60px;
    margin: 0 0 19px;
    border-bottom: 1px solid #ddd;
    font-size: 18px;
    font-weight: 600;
    line-height: 60px;
}
.field {
    margin: 0 0 23px;
    padding: 0;
    border: 0;
}
.field > label, .field legend {
    display: block;
    padding: 0;
    line-height: 16px;
    margin-bottom: 9px;
    font-weight: 600;
}
.field .required {
    font-weight: 400;
    color: #999;
}
.field input[type="text"], .field input[type="email"], .field select, .field textarea {
    display: block;
    width: 100%;
    height: 27px;
    padding: 0 6px;
    border: 1px solid #d6d6d6;
    border-radius: 2px;
    background: #fff;
}
.field input[type="text"], .field input[type="email"], .select-box {
    max-width: 60%;
}
.select-box {
    position: relative;
}
.field select {
    appearance: none;
    color: #999;
}
.select-box svg {
    position: absolute;
    right: 5px;
    top: 9px;
    width: 9px;
    height: 9px;
    color: #666;
}
fieldset.field {
    margin-bottom: 25px;
}
.field legend {
    margin-bottom: 5px;
}
.field .choice {
    display: flex;
    align-items: center;
    gap: 9px;
    margin: 0;
    line-height: 17px;
    font-size: 9px;
    font-weight: 400;
    color: #555;
}
.choice input {
    appearance: none;
    width: 11px;
    height: 11px;
    margin: 0;
    border: 1px solid #ccc;
    border-radius: 2px;
    background: linear-gradient(#eee, #fff);
}
.field textarea {
    height: 73px;
    resize: none;
}
.page-scroll {
    position: absolute;
    right: 3px;
    top: 2px;
    width: 5px;
    height: 468px;
    border-radius: 3px;
    background: #575757;
}
```
